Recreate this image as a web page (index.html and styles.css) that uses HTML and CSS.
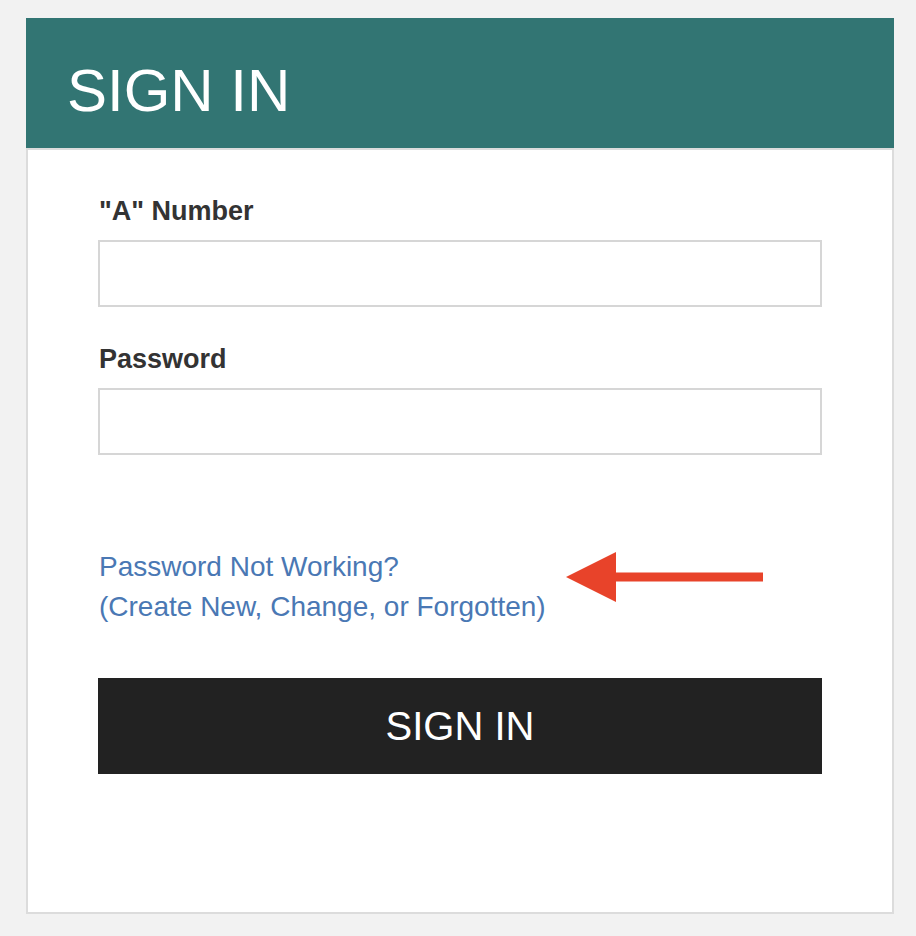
FILE: index.html
```html
<!DOCTYPE html>
<html lang="en">
<head>
<meta charset="utf-8">
<title>Sign In</title>
<link rel="stylesheet" href="styles.css">
</head>
<body>
<div class="card">
  <div class="card-header"><h1 class="title">SIGN IN</h1></div>
  <div class="card-body">
    <form class="form">
      <label class="label" for="anum">"A" Number</label>
      <input class="input" id="anum" type="text">
      <label class="label label-pw" for="pw">Password</label>
      <input class="input" id="pw" type="password">
      <div class="help">
        <a class="help-link" href="#">Password Not Working?<br>(Create New, Change, or Forgotten)</a>
        <svg class="arrow" width="200" height="52" viewBox="0 0 200 52" aria-hidden="true">
          <polygon points="0,25 50,0 50,20.5 197,20.5 197,29.5 50,29.5 50,50" fill="#e8432a"/>
        </svg>
      </div>
      <button class="btn" type="button">SIGN IN</button>
    </form>
  </div>
</div>
</body>
</html>
```

FILE: styles.css
```css
html, body {
  margin: 0;
  padding: 0;
  background: #f2f2f2;
  font-family: "Liberation Sans", Arial, Helvetica, sans-serif;
}
body {
  padding: 18px 22px 0 26px;
  height: 936px;
  box-sizing: border-box;
  overflow: hidden;
}
.card {
  width: 868px;
}
.card-header {
  background: #327573;
  height: 130px;
  box-sizing: border-box;
  padding: 16px 0 0 41px;
}
.title {
  margin: 0;
  color: #fff;
  font-weight: normal;
  font-size: 60px;
  line-height: 114px;
}
.card-body {
  background: #fff;
  border: 2px solid #dcdcdc;
  height: 766px;
  box-sizing: border-box;
  padding: 46px 70px 0 70px;
}
.form {
  display: flex;
  flex-direction: column;
}
.label {
  font-weight: bold;
  font-size: 27px;
  line-height: 30px;
  color: #333;
  margin-bottom: 14px;
  padding-left: 1px;
}
.label-pw {
  margin-top: 37px;
}
.input {
  height: 67px;
  box-sizing: border-box;
  border: 2px solid #d6d6d6;
  margin: 0;
  padding: 0 12px;
  font-size: 20px;
  background: #fff;
  outline: none;
}
.help {
  position: relative;
  margin-top: 92px;
  padding-left: 1px;
}
.help-link {
  color: #4a78b4;
  font-size: 28px;
  line-height: 40px;
  text-decoration: none;
}
.arrow {
  position: absolute;
  left: 468px;
  top: 5px;
}
.btn {
  margin-top: 51px;
  height: 96px;
  border: 0;
  background: #222;
  color: #fff;
  font-family: "Liberation Sans", Arial, Helvetica, sans-serif;
  font-size: 40px;
  line-height: 96px;
  padding: 0;
}
```
